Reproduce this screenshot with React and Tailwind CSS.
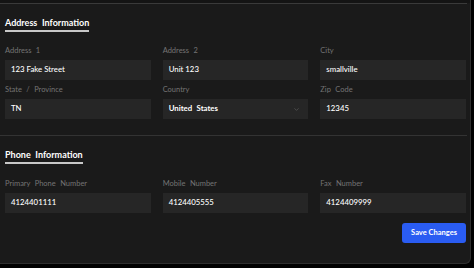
import React from 'react';
import { ChevronDown } from 'lucide-react';

const font = { fontFamily: 'Lato, "Open Sans", sans-serif' };

function Field({ label, value, select }) {
  return (
    <div className="flex flex-col">
      <label className="h-[19px] pt-[5px] text-[7.5px] leading-[10px] text-[#747474] [word-spacing:2.5px]">{label}</label>
      <div className="flex h-[20px] items-center justify-between bg-[#262626] pl-[6px] pr-[8px] text-[7.8px] font-medium text-white">
        <span className={select ? 'font-bold [word-spacing:2.5px]' : ''}>{value}</span>
        {select && <ChevronDown size={7} strokeWidth={2.5} className="text-[#5a5a5a]" />}
      </div>
    </div>
  );
}

function Heading({ children }) {
  return (
    <div className="flex">
      <h2 className="border-b-2 border-[#c8c8c8] pb-[1px] text-[9px] font-bold leading-[12px] text-white [word-spacing:2.5px]">
        {children}
      </h2>
    </div>
  );
}

export default function App() {
  return (
    <div className="h-[268px] w-[474px] overflow-hidden bg-black" style={font}>
      <div className="h-[264px] w-[471px] rounded-br-md border-r border-b border-[#2e2e2e] bg-[#1a1a1a]">
        <div className="h-[3px] bg-[#141414]" />
        <div className="h-px w-[467px] bg-[#3a3a3a]" />

        <section className="pl-[5px] pr-[4px] pt-[13px]">
          <Heading>Address Information</Heading>
          <div className="mt-[9px] grid grid-cols-3 gap-x-[12px]">
            <Field label="Address 1" value="123 Fake Street" />
            <Field label="Address 2" value="Unit 123" />
            <Field label="City" value="smallville" />
            <Field label="State / Province" value="TN" />
            <Field label="Country" value="United States" select />
            <Field label="Zip Code" value="12345" />
          </div>
        </section>

        <div className="mt-[16px] h-px w-[467px] bg-[#333333]" />

        <section className="pl-[5px] pr-[4px] pt-[13px]">
          <Heading>Phone Information</Heading>
          <div className="mt-[10px] grid grid-cols-3 gap-x-[12px]">
            <Field label="Primary Phone Number" value="4124401111" />
            <Field label="Mobile Number" value="4124405555" />
            <Field label="Fax Number" value="4124409999" />
          </div>
          <div className="mt-[10px] flex justify-end">
            <button className="h-[20px] w-[64px] rounded-[3px] bg-[#2a5cf2] text-[7.5px] font-bold text-white">
              Save Changes
            </button>
          </div>
        </section>
      </div>
    </div>
  );
}
